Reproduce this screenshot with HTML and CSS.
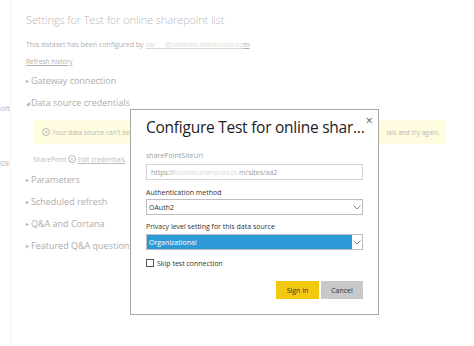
FILE: index.html
```html
<!DOCTYPE html>
<html lang="en">

<head>
  <meta charset="UTF-8">
  <title>Settings for Test for online sharepoint list</title>
  <link rel="stylesheet" href="styles.css">
</head>

<body>
  <div class="page">
    <div class="nav">
      <div class="nav-item nav-soft">Microsoft</div>
      <div class="nav-item nav-de">CODE</div>
    </div>

    <div class="settings">
      <h1 class="title">Settings for Test for online sharepoint list</h1>
      <p class="small">This dataset has been configured by <span class="link faint">usr&nbsp;&nbsp;&nbsp;&nbsp;&nbsp;@contoso.onmicroso.co</span><span class="link">m</span></p>
      <p class="small refresh"><span class="link">Refresh history</span></p>

      <div class="section"><span class="arrow">&#9656;</span>Gateway connection</div>
      <div class="section"><span class="arrow open">&#9698;</span>Data source credentials</div>

      <div class="warning">
        <span class="err-icon">&#215;</span>
        <span class="warning-text">Your data source can't be refreshed because the credentials are invalid. Please update your credent</span><span>ials and try again.</span>
      </div>

      <div class="source-row">
        <span>SharePoint</span><span class="err-icon">&#215;</span><span class="link">Edit credentials</span>
      </div>

      <div class="section"><span class="arrow">&#9656;</span>Parameters</div>
      <div class="section"><span class="arrow">&#9656;</span>Scheduled refresh</div>
      <div class="section"><span class="arrow">&#9656;</span>Q&amp;A and Cortana</div>
      <div class="section"><span class="arrow">&#9656;</span>Featured Q&amp;A questions</div>
    </div>

    <div class="dialog">
      <span class="close">&#215;</span>
      <h2 class="dialog-title">Configure Test for online shar...</h2>

      <label class="field-label muted">sharePointSiteUrl</label>
      <div class="input disabled">https://<span class="blur">contoso.sharepoint.co</span>m/sites/aa2</div>

      <label class="field-label">Authentication method</label>
      <div class="select">
        <span class="select-value">OAuth2</span>
        <span class="chevron"><svg width="8" height="5" viewBox="0 0 8 5"><polyline points="0.5,0.5 4,4 7.5,0.5" fill="none" stroke="#888" stroke-width="1"/></svg></span>
      </div>

      <label class="field-label">Privacy level setting for this data source</label>
      <div class="select selected">
        <span class="select-value">Organizational</span>
        <span class="chevron"><svg width="8" height="5" viewBox="0 0 8 5"><polyline points="0.5,0.5 4,4 7.5,0.5" fill="none" stroke="#888" stroke-width="1"/></svg></span>
      </div>

      <label class="check"><span class="box"></span>Skip test connection</label>

      <div class="buttons">
        <button class="btn primary">Sign in</button>
        <button class="btn">Cancel</button>
      </div>
    </div>
  </div>
</body>

</html>
```

FILE: styles.css
```css
* {
  box-sizing: border-box;
}
body {
  margin: 0;
  background: #fff;
  font-family: "Open Sans", "Liberation Sans", sans-serif;
}
.page {
  position: relative;
  width: 474px;
  height: 346px;
  display: flex;
  overflow: hidden;
}
.nav {
  width: 11px;
  border-right: 1px solid #f2f2f2;
  overflow: hidden;
  flex-shrink: 0;
}
.nav-item {
  display: flex;
  justify-content: flex-end;
  white-space: nowrap;
  font-size: 7px;
  color: #b5b5b5;
}
.nav-soft {
  margin-top: 104px;
}
.nav-de {
  margin-top: 46px;
}
.settings {
  padding: 9px 0 0 15px;
  color: #b0b0b0;
}
.title {
  margin: 0;
  font-size: 11px;
  font-weight: 300;
  letter-spacing: -0.1px;
  color: #b8b8b8;
  height: 22px;
  line-height: 22px;
}
.small {
  margin: 0;
  font-size: 7px;
  height: 19px;
  line-height: 19px;
  color: #b0b0b0;
}
.small:first-of-type {
  margin-top: 4px;
}
.small.refresh {
  font-size: 6.6px;
  height: 16px;
  line-height: 16px;
}
.link {
  text-decoration: underline;
}
.faint {
  color: #d8d8d8;
}
.section {
  font-size: 9px;
  height: 22px;
  line-height: 22px;
  color: #adadad;
}
.arrow {
  display: inline-block;
  width: 5px;
  font-size: 6px;
  vertical-align: 1px;
}
.arrow.open {
  font-size: 5px;
}
.warning {
  margin: 6px 0 0 7px;
  width: 412px;
  height: 24px;
  background: #fffce0;
  display: flex;
  align-items: center;
  padding: 0 5px 0 9px;
  font-size: 6.6px;
  white-space: nowrap;
  color: #b8b8b8;
}
.warning .err-icon {
  margin-right: 2px;
}
.warning-text {
  flex: 1;
  overflow: hidden;
}
.err-icon {
  display: inline-flex;
  align-items: center;
  justify-content: center;
  width: 8px;
  height: 8px;
  border: 1px solid #b8b8b8;
  border-radius: 50%;
  font-size: 7px;
  line-height: 1;
  flex-shrink: 0;
}
.source-row {
  margin: 5px 0 0 7px;
  height: 20px;
  display: flex;
  align-items: center;
  font-size: 6.6px;
  color: #bcbcbc;
}
.source-row .err-icon {
  margin: 0 2px 0 1px;
}
.dialog {
  position: absolute;
  left: 130px;
  top: 109px;
  width: 249px;
  height: 206px;
  background: #fff;
  border: 1px solid #a6a6a6;
  padding: 5px 15px 0 15px;
  color: #333;
}
.close {
  position: absolute;
  right: 5px;
  top: 1px;
  font-size: 13px;
  color: #666;
}
.dialog-title {
  margin: 0;
  font-size: 15.5px;
  font-weight: 400;
  letter-spacing: -0.25px;
  color: #222;
  height: 24px;
  line-height: 24px;
  white-space: nowrap;
}
.field-label {
  display: block;
  font-size: 7px;
  height: 10px;
  line-height: 10px;
  color: #333;
}
.field-label.muted {
  margin-top: 12px;
  color: #a0a0a0;
}
.input,
.select {
  display: flex;
  align-items: center;
  height: 16px;
  border: 1px solid #d4d4d4;
  font-size: 7px;
}
.input {
  margin: 3px 0 8px;
  padding-left: 4px;
  color: #999;
}
.blur {
  color: #dcdcdc;
  letter-spacing: -0.5px;
  margin-right: 2px;
}
.select {
  margin: 1px 0 7px;
  border-color: #bdbdbd;
  color: #333;
}
.select-value {
  flex: 1;
  padding-left: 2px;
  height: 100%;
  display: flex;
  align-items: center;
}
.chevron {
  width: 10px;
  height: 100%;
  display: flex;
  align-items: center;
  justify-content: center;
}
.selected {
  margin: 2px 0 8px;
}
.selected .select-value {
  background: #2b9ad6;
  color: #fff;
}
.check {
  display: flex;
  align-items: center;
  gap: 3px;
  font-size: 7px;
  color: #333;
  height: 10px;
}
.box {
  width: 8px;
  height: 8px;
  border: 1px solid #555;
  background: #fff;
}
.buttons {
  display: flex;
  justify-content: flex-end;
  gap: 2px;
  margin-top: 13px;
}
.btn {
  width: 42px;
  height: 18px;
  border: 0;
  background: #c8c8c8;
  font-family: inherit;
  font-size: 7px;
  color: #333;
  padding: 0;
}
.btn.primary {
  width: 43px;
  background: #f2c811;
}
```
